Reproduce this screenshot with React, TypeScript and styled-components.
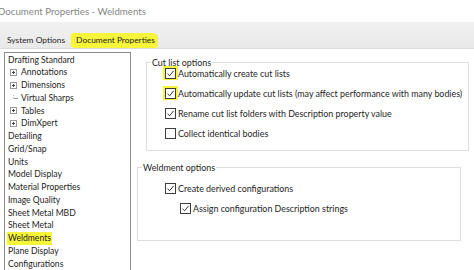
import React from "react";
import styled, { createGlobalStyle } from "styled-components";

const Global = createGlobalStyle`
  html, body { margin: 0; padding: 0; background: #fff; }
  body { font-family: Lato, "Noto Sans", sans-serif; color: #1e1e1e; overflow: hidden; }
`;

const Window = styled.div`
  width: 474px;
  height: 270px;
  overflow: hidden;
  display: flex;
  flex-direction: column;
`;

const Title = styled.div`
  height: 22px;
  flex: none;
  display: flex;
  align-items: center;
  margin-left: -2px;
  font-size: 9.7px;
  color: #858585;
`;

const TabBar = styled.div`
  height: 26px;
  flex: none;
  background: linear-gradient(#f1f1f1, #e9e9e9);
  border-bottom: 1px solid #dcdcdc;
  display: flex;
  align-items: flex-end;
  padding-left: 4px;
  gap: 3px;
`;

const Tab = styled.div<{ $hl?: boolean }>`
  font-size: 8.4px;
  height: 15px;
  line-height: 15px;
  padding: ${(p) => (p.$hl ? "0 3px 0 5px" : "0 3px")};
  margin-bottom: 0;
  background: ${(p) => (p.$hl ? "#f6f53a" : "transparent")};
  border-radius: ${(p) => (p.$hl ? "3px 5px 2px 4px" : "0")};
`;

const Content = styled.div`
  flex: 1;
  display: flex;
  padding: 3px 0 0 4px;
  min-height: 0;
`;

const Tree = styled.div`
  width: 125px;
  flex: none;
  border: 1px solid #8c8c8c;
  border-bottom: none;
  padding-top: 0.5px;
  display: flex;
  flex-direction: column;
`;

const TreeItem = styled.div<{ $indent?: boolean }>`
  height: 12.75px;
  line-height: 12.75px;
  font-size: 8.6px;
  display: flex;
  align-items: center;
  padding-left: ${(p) => (p.$indent ? "4px" : "3px")};
  white-space: nowrap;
`;

const Mark = styled.span<{ $on?: boolean }>`
  background: ${(p) => (p.$on ? "#f6f53a" : "transparent")};
  padding: 0 1px;
  margin-left: -1px;
`;

const Expander = styled.svg`
  width: 9px;
  height: 9px;
  margin-right: 3px;
  flex: none;
`;

const Right = styled.div`
  flex: 1;
  display: flex;
  flex-direction: column;
`;

const Group = styled.fieldset<{ $left: number; $right: number; $h: number; $top: number }>`
  margin: ${(p) => `${p.$top}px ${p.$right}px 0 ${p.$left}px`};
  padding: 0;
  height: ${(p) => p.$h}px;
  box-sizing: border-box;
  border: 1px solid #dedede;
  min-width: 0;
`;

const Legend = styled.legend`
  font-size: 8.9px;
  padding: 0 1px;
  margin-left: 4px;
  line-height: 11px;
`;

const Rows = styled.div<{ $shift: number }>`
  display: flex;
  flex-direction: column;
  margin-top: ${(p) => p.$shift}px;
`;

const Row = styled.div<{ $indent: number }>`
  height: 20px;
  display: flex;
  align-items: center;
  padding-left: ${(p) => p.$indent}px;
  font-size: 8.9px;
  white-space: nowrap;
`;

const BoxWrap = styled.span<{ $hl?: boolean }>`
  width: 15px;
  height: 14px;
  display: flex;
  align-items: center;
  justify-content: center;
  background: ${(p) => (p.$hl ? "#f6f53a" : "transparent")};
  flex: none;
`;

const Box = styled.span`
  width: 9px;
  height: 9px;
  border: 1px solid #3c3c3c;
  background: #fff;
  display: flex;
  align-items: center;
  justify-content: center;
`;

const Label = styled.span`
  margin-left: 0;
`;

function Check({ on, hl }: { on: boolean; hl?: boolean }) {
  return (
    <BoxWrap $hl={hl}>
      <Box>
        {on && (
          <svg width="9" height="9" viewBox="0 0 9 9">
            <path d="M1.5 4.6 L3.6 6.8 L7.6 1.8" fill="none" stroke="#333" strokeWidth="1" />
          </svg>
        )}
      </Box>
    </BoxWrap>
  );
}

function Plus() {
  return (
    <Expander viewBox="0 0 9 9">
      <line x1="4.5" y1="-3" x2="4.5" y2="12" stroke="#b9b9b9" strokeWidth="1" strokeDasharray="1 1" />
      <rect x="1.5" y="1.5" width="6" height="6" fill="#fff" stroke="#9a9a9a" />
      <line x1="3" y1="4.5" x2="6" y2="4.5" stroke="#444" />
      <line x1="4.5" y1="3" x2="4.5" y2="6" stroke="#444" />
    </Expander>
  );
}

function Leaf() {
  return (
    <Expander viewBox="0 0 9 9">
      <line x1="4.5" y1="-3" x2="4.5" y2="4.5" stroke="#b9b9b9" strokeDasharray="1 1" />
      <line x1="4.5" y1="4.5" x2="9" y2="4.5" stroke="#9a9a9a" />
    </Expander>
  );
}

const tree: { label: string; kind?: "plus" | "leaf"; hl?: boolean }[] = [
  { label: "Drafting Standard" },
  { label: "Annotations", kind: "plus" },
  { label: "Dimensions", kind: "plus" },
  { label: "Virtual Sharps", kind: "leaf" },
  { label: "Tables", kind: "plus" },
  { label: "DimXpert", kind: "plus" },
  { label: "Detailing" },
  { label: "Grid/Snap" },
  { label: "Units" },
  { label: "Model Display" },
  { label: "Material Properties" },
  { label: "Image Quality" },
  { label: "Sheet Metal MBD" },
  { label: "Sheet Metal" },
  { label: "Weldments", hl: true },
  { label: "Plane Display" },
  { label: "Configurations" },
];

export default function App() {
  return (
    <Window>
      <Global />
      <Title>Document Properties - Weldments</Title>
      <TabBar>
        <Tab>System Options</Tab>
        <Tab $hl>Document Properties</Tab>
      </TabBar>
      <Content>
        <Tree>
          {tree.map((t) => (
            <TreeItem key={t.label} $indent={!!t.kind}>
              {t.kind === "plus" && <Plus />}
              {t.kind === "leaf" && <Leaf />}
              <Mark $on={t.hl}>{t.label}</Mark>
            </TreeItem>
          ))}
        </Tree>
        <Right>
          <Group $left={15} $right={5} $h={94} $top={5}>
            <Legend>Cut list options</Legend>
            <Rows $shift={-5}>
              <Row $indent={16}>
                <Check on hl />
                <Label>Automatically create cut lists</Label>
              </Row>
              <Row $indent={16}>
                <Check on hl />
                <Label>Automatically update cut lists (may affect performance with many bodies)</Label>
              </Row>
              <Row $indent={16}>
                <Check on />
                <Label>Rename cut list folders with Description property value</Label>
              </Row>
              <Row $indent={16}>
                <Check on={false} />
                <Label>Collect identical bodies</Label>
              </Row>
            </Rows>
          </Group>
          <Group $left={6} $right={13} $h={79} $top={11}>
            <Legend>Weldment options</Legend>
            <Rows $shift={5}>
              <Row $indent={25}>
                <Check on />
                <Label>Create derived configurations</Label>
              </Row>
              <Row $indent={40}>
                <Check on />
                <Label>Assign configuration Description strings</Label>
              </Row>
            </Rows>
          </Group>
        </Right>
      </Content>
    </Window>
  );
}
